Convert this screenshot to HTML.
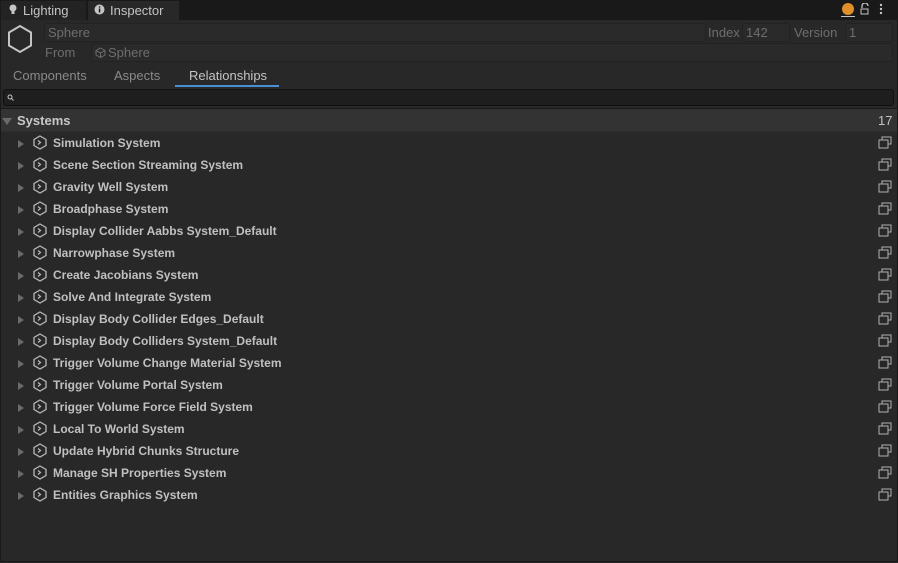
<!DOCTYPE html><html><head><style>
*{margin:0;padding:0;box-sizing:border-box}
body{width:898px;height:562px;background:#282828;font-family:"Liberation Sans",sans-serif;font-size:12px;color:#c4c4c4;position:relative;overflow:hidden}
.a{position:absolute}
#w{position:absolute;left:1px;top:1px;width:898px;height:562px}
.fld{position:absolute;background:#2a2a2a;border:1px solid #222;border-radius:3px;color:#6e6e6e;padding-left:3px;line-height:17px;height:19px;font-size:13px}
.row{position:absolute;left:0;width:896px;height:22px;font-weight:bold;color:#c0c0c0}
.row .t{position:absolute;left:52px;top:4px}
.row .ar{position:absolute;left:17px;top:8px;width:0;height:0;border-left:6px solid #6a6a6a;border-top:4px solid transparent;border-bottom:4px solid transparent}
.row svg{position:absolute}
</style></head><body>
<div class="a" style="left:0;top:0;width:898px;height:20px;background:#191919"></div>
<div id="w">
<div class="a" style="left:0;top:0;width:85px;height:19px;background:#232323"></div>
<div class="a" style="left:87px;top:0;width:91px;height:19px;background:#282828"></div>
<svg class="a" style="left:8px;top:3px" width="8" height="11"><circle cx="4" cy="4" r="3.5" fill="#c4c4c4"/><rect x="2.5" y="7" width="3" height="3" fill="#c4c4c4"/></svg>
<div class="a" style="left:22px;top:2px;font-size:13px">Lighting</div>
<svg class="a" style="left:93px;top:3px" width="11" height="11"><circle cx="5.5" cy="5.5" r="5" fill="#c4c4c4"/><rect x="4.8" y="4.5" width="1.5" height="4" fill="#191919"/><rect x="4.8" y="2.3" width="1.5" height="1.3" fill="#191919"/></svg>
<div class="a" style="left:109px;top:2px;font-size:13px">Inspector</div>
<div class="a" style="left:841px;top:2px;width:12px;height:12px;border-radius:50%;background:#e08f2a"></div>
<div class="a" style="left:840px;top:15px;width:14px;height:1px;background:#c4c4c4"></div>
<svg class="a" style="left:859px;top:2px" width="10" height="12"><path d="M2 5V3a3 3 0 0 1 6 0" stroke="#c4c4c4" fill="none" stroke-width="1.3"/><rect x="1" y="6" width="7" height="5" stroke="#c4c4c4" fill="none"/></svg>
<svg class="a" style="left:878px;top:2px" width="4" height="12"><circle cx="2" cy="2" r="1.2" fill="#c4c4c4"/><circle cx="2" cy="6" r="1.2" fill="#c4c4c4"/><circle cx="2" cy="10" r="1.2" fill="#c4c4c4"/></svg>
<svg class="a" style="left:6px;top:23px" width="26" height="30"><polygon points="13,2 24,8.5 24,21.5 13,28 2,21.5 2,8.5" fill="none" stroke="#c4c4c4" stroke-width="2"/></svg>
<div class="fld" style="left:43px;top:22px;width:662px">Sphere</div>
<div class="a" style="left:707px;top:24px;color:#6e6e6e;font-size:13px">Index</div>
<div class="fld" style="left:741px;top:22px;width:48px">142</div>
<div class="a" style="left:793px;top:24px;color:#6e6e6e;font-size:13px">Version</div>
<div class="fld" style="left:844px;top:22px;width:48px">1</div>
<div class="a" style="left:44px;top:44px;color:#6e6e6e;font-size:13px">From</div>
<div class="fld" style="left:90px;top:42px;width:802px;padding-left:16px">Sphere</div>
<svg class="a" style="left:94px;top:46px" width="11" height="11"><path d="M5.5 1L10 3.5V8L5.5 10.5L1 8V3.5Z M1 3.5L5.5 6L10 3.5 M5.5 6V10.5" fill="none" stroke="#6e6e6e"/></svg>
<div class="a" style="left:12px;top:67px;color:#8a8a8a;font-size:13px">Components</div>
<div class="a" style="left:113px;top:67px;color:#8a8a8a;font-size:13px">Aspects</div>
<div class="a" style="left:188px;top:67px;color:#c4c4c4;font-size:13px">Relationships</div>
<div class="a" style="left:174px;top:84px;width:104px;height:2px;background:#4a8fd4"></div>
<div class="a" style="left:2px;top:88px;width:891px;height:17px;background:#1e1e1e;border:1px solid #111;border-radius:3px"></div>
<svg class="a" style="left:6px;top:93px" width="7" height="7"><circle cx="3" cy="3" r="2" fill="none" stroke="#c4c4c4"/><path d="M4.5 4.5L6.5 6.5" stroke="#c4c4c4"/></svg>
<div class="a" style="left:-1px;top:107px;width:898px;height:1px;background:#1a1a1a"></div>
<div class="a" style="left:-1px;top:108px;width:898px;height:22px;background:#333"></div>
<div class="a" style="left:1px;top:117px;border-top:7px solid #6a6a6a;border-left:5px solid transparent;border-right:5px solid transparent"></div>
<div class="a" style="left:16px;top:112px;font-weight:bold;font-size:13px;color:#c8c8c8">Systems</div>
<div class="a" style="left:877px;top:112px;font-size:13px">17</div>
<div class="a" style="left:-1px;top:130px;width:898px;height:1px;background:#2e2e2e"></div>
<div id="rows"></div>
</div>
<div class="a" style="left:0;top:0;width:898px;height:562px;border:1px solid #191919"></div>
<script>
var n=["Simulation System","Scene Section Streaming System","Gravity Well System","Broadphase System","Display Collider Aabbs System_Default","Narrowphase System","Create Jacobians System","Solve And Integrate System","Display Body Collider Edges_Default","Display Body Colliders System_Default","Trigger Volume Change Material System","Trigger Volume Portal System","Trigger Volume Force Field System","Local To World System","Update Hybrid Chunks Structure","Manage SH Properties System","Entities Graphics System"];
var h="";n.forEach(function(s,i){var y=131+i*22;h+='<div class="row" style="top:'+y+'px"><div class="ar"></div><svg style="left:32px;top:3px" width="14" height="15"><polygon points="7,1 13,4.5 13,10.5 7,14 1,10.5 1,4.5" fill="none" stroke="#b8b8b8" stroke-width="1.3"/><path d="M5 5.5L7.5 7.5L5 9.5" fill="none" stroke="#b8b8b8" stroke-width="1.2"/></svg><div class="t">'+s+'</div><svg style="left:877px;top:4px" width="14" height="13"><rect x="4" y="1" width="9" height="7" fill="none" stroke="#b0b0b0"/><rect x="1" y="4" width="9" height="8" fill="#282828" stroke="#b0b0b0"/></svg></div>'});
document.getElementById("rows").innerHTML=h;
</script>
</body></html>
